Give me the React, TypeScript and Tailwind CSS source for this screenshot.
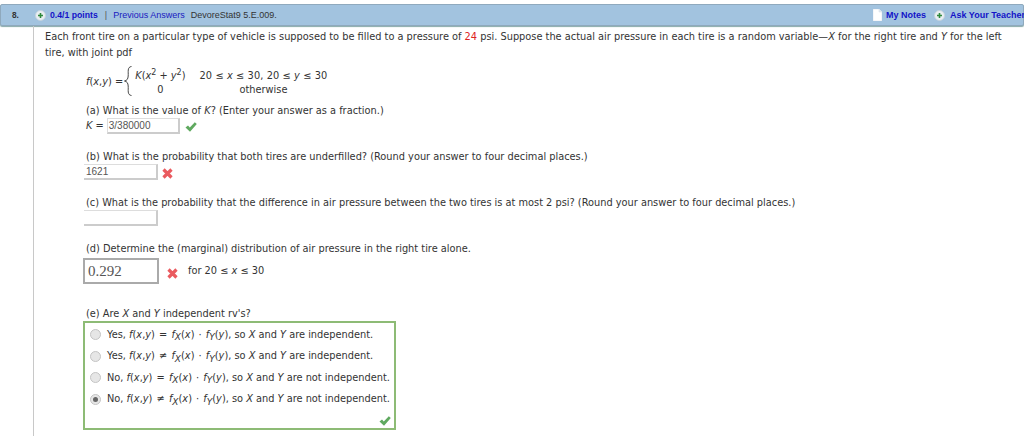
import React from "react";

const Check = ({ className = "" }: { className?: string }) => (
  <svg viewBox="0 0 12 10" className={className} width="12" height="10">
    <path d="M0.5 5.5 L3 3.5 L4.8 5.6 L9.8 0.3 L11.8 2 L5 9.8 Z" fill="#5fa95f" />
  </svg>
);
const Cross = () => (
  <svg viewBox="0 0 11 11" width="11" height="11">
    <path d="M1.5 1.5 L9.5 9.5 M9.5 1.5 L1.5 9.5" stroke="#ea5a5f" strokeWidth="3.2" />
  </svg>
);
const Plus = () => (
  <span className="w-[11px] h-[11px] rounded-full bg-[#e9eef2] border border-[#c5d3de] flex items-center justify-center shrink-0">
    <svg viewBox="0 0 7 7" width="7" height="7">
      <path d="M3.5 1 V6 M1 3.5 H6" stroke="#2f8a3c" strokeWidth="1.6" />
    </svg>
  </span>
);
const F = ({ n }: { n: string }) => (
  <>
    <i>f</i>
    <sub className="text-[9px] italic">{n}</sub>
  </>
);

const Opt = ({ a, op, b, on = false }: { a: string; op: string; b: string; on?: boolean }) => (
  <div className="flex items-center h-[21.5px] whitespace-nowrap">
    <span className="w-[11px] h-[11px] rounded-full border border-[#c4c4c4] bg-[#e6e6e6] mr-[6px] ml-[1px] flex items-center justify-center">
      {on && <span className="w-[5px] h-[5px] rounded-full bg-[#666]" />}
    </span>
    <span>
      {a}, <i>f</i>(<i>x</i>,<i>y</i>) <span className="mx-[1px]">{op}</span> <F n="X" />(<i>x</i>) <span className="mx-[1px]">·</span> <F n="Y" />(<i>y</i>), so <i>X</i> and <i>Y</i> {b}
    </span>
  </div>
);

const fieldClass =
  "border-t border-[#ddd] border-r-2 border-b-2 border-r-[#ccc] border-b-[#ccc] font-['Liberation_Sans',sans-serif] text-[10px] text-[#555] leading-[14px]";

export default function App() {
  return (
    <div className="w-[1024px] h-[436px] overflow-hidden bg-white text-[#333] font-['DejaVu_Sans',sans-serif] text-[9.8px] leading-[16px]">
      <div className="h-[4px]" />
      <div className="h-[22px] bg-[#a2c3df] border border-[#8fa9bd] rounded-[2px] flex items-center text-[9px] font-['Liberation_Sans',sans-serif] whitespace-nowrap shadow-[0_1px_1px_#8aa]">
        <b className="ml-[11px] w-[23px] text-[#333] text-[8.3px]">8.</b>
        <Plus />
        <b className="ml-[4px] text-[#1313c8] text-[8.7px]">0.4/1 points</b>
        <span className="ml-[7px] text-[#555]">|</span>
        <span className="ml-[6px] text-[#1a1ac0]">Previous Answers</span>
        <span className="ml-[6px] text-[#333]">DevoreStat9 5.E.009.</span>
        <svg viewBox="0 0 9 12" width="9" height="12" className="ml-auto mr-[4px] shrink-0">
          <path d="M0 0 H6 L9 3 V12 H0 Z" fill="#fff" stroke="#d0dbe4" strokeWidth="0.5" />
          <path d="M6 0 V3 H9" fill="#e4ebf1" stroke="#d0dbe4" strokeWidth="0.5" />
        </svg>
        <b className="text-[#1313c8]">My Notes</b>
        <span className="ml-[8px] mr-[5px] flex"><Plus /></span>
        <b className="text-[#1313c8] mr-[-2px]">Ask Your Teacher</b>
      </div>
      <div className="ml-[33px] h-[411px] border-l border-[#c8c8c8] pl-[11px] pt-[3px]">
        <div className="whitespace-nowrap">
          Each front tire on a particular type of vehicle is supposed to be filled to a pressure of <span className="text-[#d22]">24</span> psi. Suppose the actual air pressure in each tire is a random variable—<i>X</i> for the right tire and <i>Y</i> for the left
          <br />
          tire, with joint pdf
        </div>
        <div className="flex ml-[41px] mt-[5px] h-[30px] items-center whitespace-nowrap">
          <span className="mt-[2px]"><i>f</i>(<i>x</i>,<i>y</i>) =</span>
          <svg viewBox="0 0 8 30" width="8" height="30" className="ml-[1px] mr-[3px] shrink-0">
            <path d="M7.5 0.5 C3 1 4.5 6 4.2 10 C4 13 3 14.5 0.5 15 C3 15.5 4 17 4.2 20 C4.5 24 3 29 7.5 29.5" fill="none" stroke="#333" strokeWidth="0.9" />
          </svg>
          <div className="grid grid-cols-[auto_auto] gap-x-[14px] leading-[14px] text-center pt-[3px]">
            <span><i>K</i>(<i>x</i><sup className="text-[8px]">2</sup> + <i>y</i><sup className="text-[8px]">2</sup>)</span>
            <span className="tracking-[0.1px]">20 ≤ <i>x</i> ≤ 30, 20 ≤ <i>y</i> ≤ 30</span>
            <span>0</span>
            <span>otherwise</span>
          </div>
        </div>
        <div className="ml-[41px] mt-[7px] h-[15px]">(a) What is the value of <i>K</i>? (Enter your answer as a fraction.)</div>
        <div className="ml-[41px] flex items-center h-[15px]">
          <span><i>K</i> =</span>
          <span className={`ml-[3px] w-[73px] h-[16px] border-l pl-[1px] ${fieldClass}`}>3/380000</span>
          <Check className="ml-[5px] mt-[3px]" />
        </div>
        <div className="ml-[41px] mt-[16px] h-[15px]">(b) What is the probability that both tires are underfilled? (Round your answer to four decimal places.)</div>
        <div className="ml-[39px] flex items-center h-[16px]">
          <span className={`w-[74px] h-[16px] pl-[2px] ${fieldClass}`}>1621</span>
          <span className="ml-[4px] mt-[2px] flex"><Cross /></span>
        </div>
        <div className="ml-[41px] mt-[15px] h-[15px]">(c) What is the probability that the difference in air pressure between the two tires is at most 2 psi? (Round your answer to four decimal places.)</div>
        <div className={`ml-[39px] w-[74px] h-[16px] ${fieldClass}`} />
        <div className="ml-[41px] mt-[15px] h-[15px]">(d) Determine the (marginal) distribution of air pressure in the right tire alone.</div>
        <div className="ml-[38px] mt-[2px] flex items-center h-[26px]">
          <span className="w-[76px] h-[26px] border-2 border-[#aaa] font-['Liberation_Serif',serif] text-[15px] text-[#555] pl-[3px] leading-[22px]">0.292</span>
          <span className="ml-[8px] mt-[4px] flex"><Cross /></span>
          <span className="ml-[10px]">for 20 ≤ <i>x</i> ≤ 30</span>
        </div>
        <div className="ml-[41px] mt-[22px] h-[15px]">(e) Are <i>X</i> and <i>Y</i> independent rv's?</div>
        <div className="ml-[38px] w-[313px] h-[109px] border-2 border-[#8dbb75] pl-[4px] pt-[1px] relative">
          <Opt a="Yes" op="=" b="are independent." />
          <Opt a="Yes" op="≠" b="are independent." />
          <Opt a="No" op="=" b="are not independent." />
          <Opt a="No" op="≠" b="are not independent." on />
          <Check className="absolute right-[3px] bottom-[2px]" />
        </div>
      </div>
    </div>
  );
}
